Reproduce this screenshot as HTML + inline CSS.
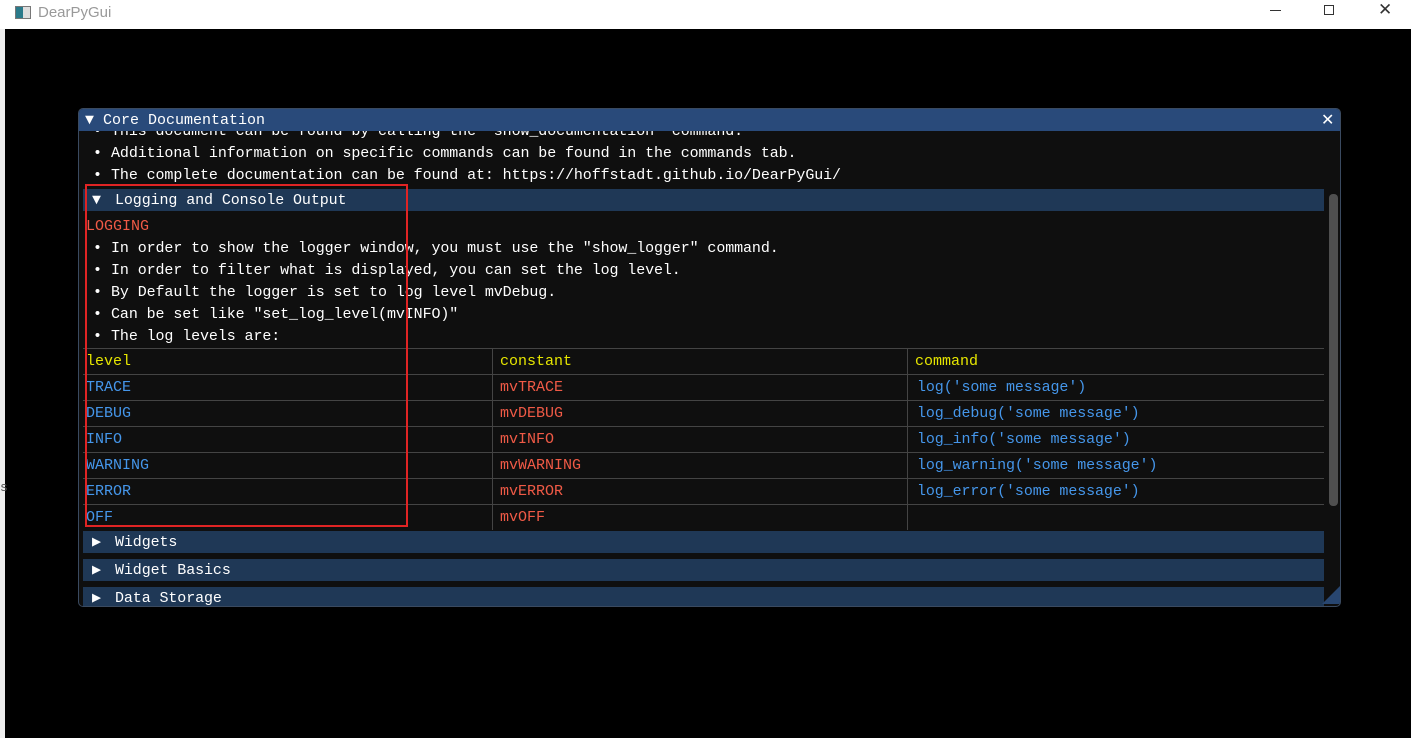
<!DOCTYPE html>
<html><head><meta charset="utf-8"><style>
*{margin:0;padding:0;box-sizing:border-box}
body{width:1411px;height:738px;overflow:hidden;background:#000;position:relative;font-family:"Liberation Mono","DejaVu Sans Mono",monospace;font-size:15px;color:#fff}
.abs{position:absolute;white-space:pre}
#tb{left:0;top:0;width:1411px;height:29px;background:#fff}
#strip{left:0;top:29px;width:5px;height:709px;background:#eeeeee}
#win{left:78px;top:108px;width:1263px;height:499px;background:#0f0f0f;border:1px solid #3a4a60;border-radius:5px;overflow:hidden}
.t{position:absolute;white-space:pre;line-height:22px;top:1px}
.txt{letter-spacing:-0.1px}
.hdr{position:absolute;left:4px;width:1241px;height:22px;background:#1f3856}
.y{color:#e6e600}.b{color:#4596ea}.r{color:#f05a46}
.hl{position:absolute;left:4px;width:1241px;height:1px;background:#444}
.vl{position:absolute;width:1px;background:#444}
</style></head><body>
<div class="abs" id="tb"></div>
<div class="abs" style="left:15px;top:6px;width:16px;height:13px;border:1px solid #777;background:linear-gradient(90deg,#2a7a8a 0 50%,#ddd 50%)"></div>
<div class="abs" style="left:38px;top:4px;font-family:'Liberation Sans',sans-serif;font-size:15px;color:#999">DearPyGui</div>
<div class="abs" style="left:1270px;top:10px;width:11px;height:1px;background:#333"></div>
<div class="abs" style="left:1324px;top:5px;width:10px;height:10px;border:1px solid #333"></div>
<div class="abs" style="left:1378px;top:0px;font-family:'Liberation Sans',sans-serif;font-size:17px;color:#333">✕</div>
<div class="abs" id="strip"></div>
<div class="abs" style="left:0;top:480px;font-size:13px;color:#555">s</div>
<div class="abs" id="win">
 <div style="position:absolute;left:0;top:0;width:100%;height:22px;background:#294a7a"></div>
 <div class="t" style="left:6px;top:1px">▼ Core Documentation</div>
 <div class="t" style="left:1242px;top:0;font-family:'DejaVu Sans',sans-serif;font-size:16px">✕</div>
 <div style="position:absolute;left:0;top:22px;width:100%;height:477px;overflow:hidden">
  <div class="t" style="left:14px;top:-10px">• <span class="txt">This document can be found by calling the "show_documentation" command.</span></div>
  <div class="t" style="left:14px;top:12px">• <span class="txt">Additional information on specific commands can be found in the commands tab.</span></div>
  <div class="t" style="left:14px;top:34px">• <span class="txt">The complete documentation can be found at: https://hoffstadt.github.io/DearPyGui/</span></div>
  <div class="hdr" style="top:58px"></div>
  <div class="t" style="left:13px;top:59px">▼</div><div class="t txt" style="left:36px;top:59px">Logging and Console Output</div>
  <div class="t r" style="left:7px;top:85px">LOGGING</div>
  <div class="t" style="left:14px;top:107px">• <span class="txt">In order to show the logger window, you must use the "show_logger" command.</span></div>
  <div class="t" style="left:14px;top:129px">• <span class="txt">In order to filter what is displayed, you can set the log level.</span></div>
  <div class="t" style="left:14px;top:151px">• <span class="txt">By Default the logger is set to log level mvDebug.</span></div>
  <div class="t" style="left:14px;top:173px">• <span class="txt">Can be set like "set_log_level(mvINFO)"</span></div>
  <div class="t" style="left:14px;top:195px">• <span class="txt">The log levels are:</span></div>
  <div class="hl" style="top:217px"></div><div class="hl" style="top:243px"></div><div class="hl" style="top:269px"></div><div class="hl" style="top:295px"></div><div class="hl" style="top:321px"></div><div class="hl" style="top:347px"></div><div class="hl" style="top:373px"></div>
  <div class="vl" style="left:413px;top:217px;height:182px"></div>
  <div class="vl" style="left:828px;top:217px;height:182px"></div>
  <div class="t y" style="left:7px;top:220px">level</div><div class="t y" style="left:421px;top:220px">constant</div><div class="t y" style="left:836px;top:220px">command</div>
  <div class="t b" style="left:7px;top:246px">TRACE</div><div class="t r" style="left:421px;top:246px">mvTRACE</div><div class="t b txt" style="left:838px;top:246px">log('some message')</div>
  <div class="t b" style="left:7px;top:272px">DEBUG</div><div class="t r" style="left:421px;top:272px">mvDEBUG</div><div class="t b txt" style="left:838px;top:272px">log_debug('some message')</div>
  <div class="t b" style="left:7px;top:298px">INFO</div><div class="t r" style="left:421px;top:298px">mvINFO</div><div class="t b txt" style="left:838px;top:298px">log_info('some message')</div>
  <div class="t b" style="left:7px;top:324px">WARNING</div><div class="t r" style="left:421px;top:324px">mvWARNING</div><div class="t b txt" style="left:838px;top:324px">log_warning('some message')</div>
  <div class="t b" style="left:7px;top:350px">ERROR</div><div class="t r" style="left:421px;top:350px">mvERROR</div><div class="t b txt" style="left:838px;top:350px">log_error('some message')</div>
  <div class="t b" style="left:7px;top:376px">OFF</div><div class="t r" style="left:421px;top:376px">mvOFF</div>
  <div class="hdr" style="top:400px"></div><div class="t" style="left:13px;top:401px">▶</div><div class="t txt" style="left:36px;top:401px">Widgets</div>
  <div class="hdr" style="top:428px"></div><div class="t" style="left:13px;top:429px">▶</div><div class="t txt" style="left:36px;top:429px">Widget Basics</div>
  <div class="hdr" style="top:456px"></div><div class="t" style="left:13px;top:457px">▶</div><div class="t txt" style="left:36px;top:457px">Data Storage</div>
  <div style="position:absolute;left:1250px;top:63px;width:9px;height:312px;background:#4f4f4f;border-radius:4px"></div>
  <div style="position:absolute;left:1243px;top:455px;width:0;height:0;border-left:18px solid transparent;border-bottom:18px solid #284670"></div>
 </div>
</div>
<div class="abs" style="left:85px;top:184px;width:323px;height:343px;border:2px solid #e02424"></div>
</body></html>
